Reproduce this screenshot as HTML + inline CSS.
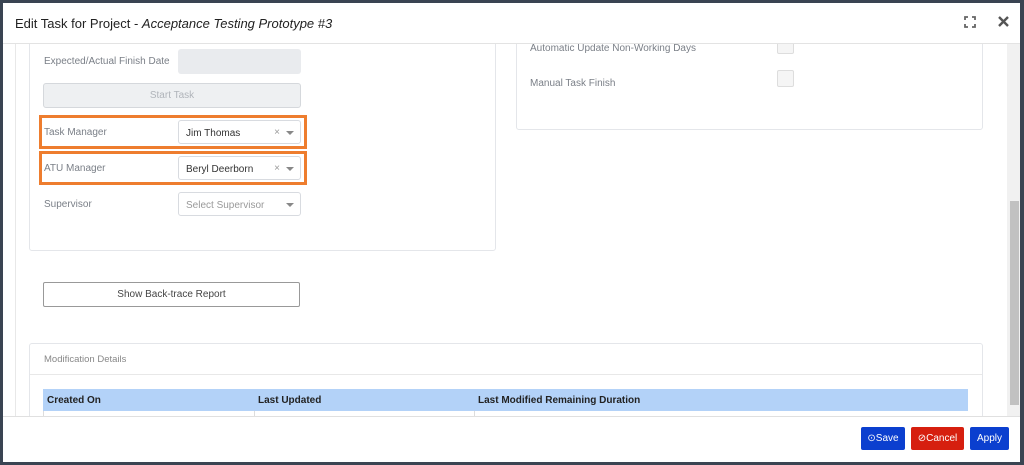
<!DOCTYPE html>
<html><head><style>
*{box-sizing:border-box;margin:0;padding:0}
body{width:1024px;height:465px;background:#3a4452;position:relative;overflow:hidden;font-family:"Liberation Sans",sans-serif;}
.modal{position:absolute;left:3px;top:3px;width:1017px;height:459px;background:#fff;}
.hdr{position:absolute;left:0;top:0;width:100%;height:41px;border-bottom:1px solid #e3e3e3;background:#fff;z-index:5}
.hdr .t{position:absolute;left:12px;top:13px;font-size:13px;color:#222}
.abs{position:absolute}
.card{position:absolute;border:1px solid #e4e6ea;border-radius:3px;background:#fff}
.lbl{position:absolute;font-size:10px;color:#7a7f87}
.sel{position:absolute;height:24px;border:1px solid #d8dbe0;border-radius:3px;background:#fff;font-size:10px;color:#333;padding:7px 7px}
.sel .x{position:absolute;right:20px;top:6px;color:#999;font-size:10px}
.sel .c{position:absolute;right:6px;top:10px;border-left:4px solid transparent;border-right:4px solid transparent;border-top:4px solid #888}
.hl{position:absolute;border:3px solid #ee7d2e}
.btn{position:absolute;color:#fff;font-size:10px;text-align:center;border-radius:2px;line-height:23px;z-index:6}
.chk{position:absolute;width:17px;height:17px;border:1px solid #ddd;border-radius:2px;background:#f5f5f5}
</style></head><body>
<div class="modal">
 <div class="hdr"><div class="t">Edit Task for Project - <i>Acceptance Testing Prototype #3</i></div>
  <svg class="abs" style="left:961px;top:13px" width="12" height="12" viewBox="0 0 12 12" fill="none" stroke="#666" stroke-width="1.8"><path d="M1 4V1h3M8 1h3v3M11 8v3H8M4 11H1V8"/></svg>
  <svg class="abs" style="left:995px;top:13px" width="11" height="11" viewBox="0 0 11 11" stroke="#555" stroke-width="2.4"><path d="M1 1l9 9M10 1l-9 9"/></svg>
 </div>
 <div class="abs" style="left:12px;top:41px;width:1px;height:372px;background:#e8e8e8"></div>
 <div class="card" style="left:26px;top:20px;width:467px;height:228px"></div>
 <div class="lbl" style="left:41px;top:53px">Expected/Actual Finish Date</div>
 <div class="abs" style="left:175px;top:46px;width:123px;height:25px;background:#e9ebee;border-radius:3px"></div>
 <div class="abs" style="left:40px;top:80px;width:258px;height:25px;background:#eef0f2;border:1px solid #d5d8dc;border-radius:3px;font-size:10px;color:#b0b4ba;text-align:center;line-height:23px">Start Task</div>
 <div class="hl" style="left:36px;top:112px;width:268px;height:34px"></div>
 <div class="hl" style="left:36px;top:148px;width:268px;height:34px"></div>
 <div class="lbl" style="left:41px;top:124px">Task Manager</div>
 <div class="sel" style="left:175px;top:117px;width:123px">Jim Thomas<span class="x">×</span><span class="c"></span></div>
 <div class="lbl" style="left:41px;top:160px">ATU Manager</div>
 <div class="sel" style="left:175px;top:153px;width:123px">Beryl Deerborn<span class="x">×</span><span class="c"></span></div>
 <div class="lbl" style="left:41px;top:196px">Supervisor</div>
 <div class="sel" style="left:175px;top:189px;width:123px;color:#999">Select Supervisor<span class="c"></span></div>
 <div class="card" style="left:513px;top:20px;width:467px;height:107px"></div>
 <div class="lbl" style="left:527px;top:40px">Automatic Update Non-Working Days</div>
 <div class="chk" style="left:774px;top:34px"></div>
 <div class="lbl" style="left:527px;top:75px">Manual Task Finish</div>
 <div class="chk" style="left:774px;top:67px"></div>
 <div class="abs" style="left:40px;top:279px;width:257px;height:25px;border:1px solid #999;border-radius:2px;font-size:10px;color:#444;text-align:center;line-height:23px">Show Back-trace Report</div>
 <div class="card" style="left:26px;top:340px;width:954px;height:90px"></div>
 <div class="abs" style="left:27px;top:371px;width:952px;height:1px;background:#e8e8e8"></div>
 <div class="lbl" style="left:41px;top:351px;font-size:9.5px;color:#888">Modification Details</div>
 <div class="abs" style="left:40px;top:386px;width:925px;height:22px;background:#b3d2f8;font-size:10px;font-weight:bold;color:#222">
  <span class="abs" style="left:4px;top:6px">Created On</span>
  <span class="abs" style="left:215px;top:6px">Last Updated</span>
  <span class="abs" style="left:435px;top:6px">Last Modified Remaining Duration</span>
 </div>
 <div class="abs" style="left:40px;top:408px;width:925px;height:5px;border-left:1px solid #ddd"></div>
 <div class="abs" style="left:251px;top:408px;width:1px;height:5px;background:#ddd"></div>
 <div class="abs" style="left:471px;top:408px;width:1px;height:5px;background:#ddd"></div>
 <div class="abs" style="left:1004px;top:41px;width:13px;height:372px;background:#f1f1f1"></div>
 <div class="abs" style="left:1007px;top:198px;width:9px;height:204px;background:#c1c1c1"></div>
 <div class="abs" style="left:0;top:413px;width:100%;height:46px;background:#fff;border-top:1px solid #e0e0e0;z-index:5"></div>
 <div class="btn" style="left:858px;top:424px;width:44px;background:#0b3fcf">⊙Save</div>
 <div class="btn" style="left:908px;top:424px;width:53px;background:#d61f0f">⊘Cancel</div>
 <div class="btn" style="left:967px;top:424px;width:39px;background:#0b3fcf">Apply</div>
</div>
</body></html>
